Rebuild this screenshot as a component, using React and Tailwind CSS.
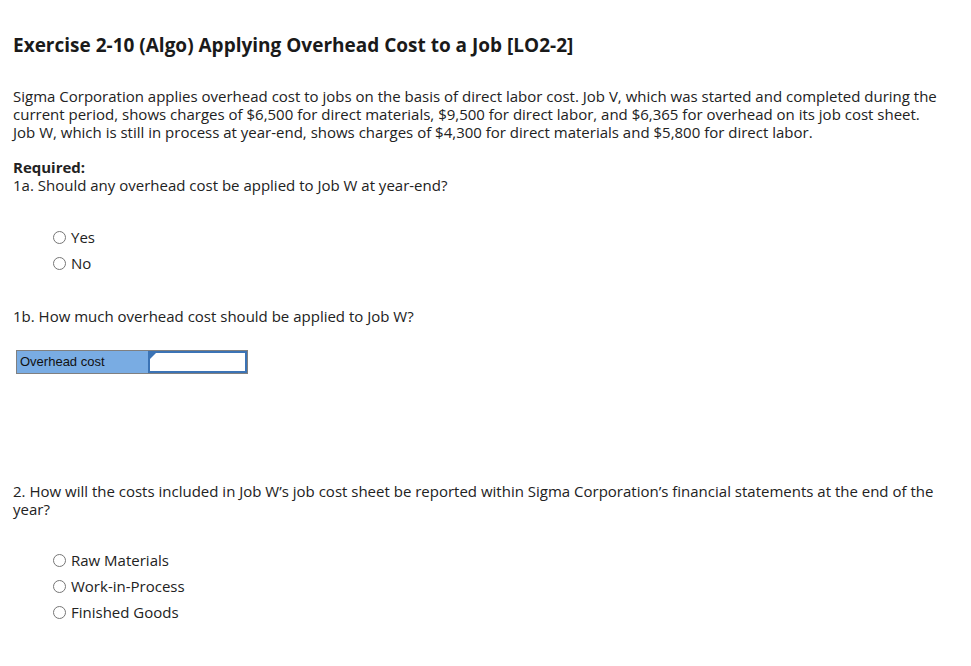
export default function App() {
  const font = { fontFamily: '"Open Sans", "Liberation Sans", sans-serif' };
  const Radio = ({ label }) => (
    <label className="flex items-center h-[26px] text-[15px] text-[#222]">
      <span className="w-[13px] h-[13px] rounded-full border border-[#767676] bg-white mr-[5px]" />
      {label}
    </label>
  );
  return (
    <div className="min-h-[666px] w-[971px] bg-white text-[#222] px-[13px]" style={font}>
      <h1 className="pt-[33px] text-[19px] font-bold leading-[24px] text-[#1a1a1a]">
        Exercise 2-10 (Algo) Applying Overhead Cost to a Job [LO2-2]
      </h1>
      <p className="mt-[30px] text-[15px] leading-[18px]">
        Sigma Corporation applies overhead cost to jobs on the basis of direct labor cost. Job V, which was started and completed during the
        <br />
        current period, shows charges of $6,500 for direct materials, $9,500 for direct labor, and $6,365 for overhead on its job cost sheet.
        <br />
        Job W, which is still in process at year-end, shows charges of $4,300 for direct materials and $5,800 for direct labor.
      </p>
      <div className="mt-[17px] text-[15px] leading-[18px]">
        <div className="font-bold">Required:</div>
        <div>1a. Should any overhead cost be applied to Job W at year-end?</div>
      </div>
      <div className="mt-[30px] pl-[40px]">
        <Radio label="Yes" />
        <Radio label="No" />
      </div>
      <p className="mt-[31px] text-[15px] leading-[18px]">1b. How much overhead cost should be applied to Job W?</p>
      <div className="mt-[25px] ml-[3px] flex w-[232px] h-[24px] border border-[#808080]">
        <div
          className="w-[131px] bg-[#79ace3] text-[13px] leading-[22px] pl-[3px] text-[#111]"
          style={{ fontFamily: '"Liberation Sans", Arial, sans-serif' }}
        >
          Overhead cost
        </div>
        <div className="relative flex-1 bg-white border-2 border-[#3b73b5]">
          <svg className="absolute left-0 top-0" width="6" height="6" viewBox="0 0 6 6">
            <path d="M0 0 L6 0 L0 6 Z" fill="#3b73b5" />
          </svg>
        </div>
      </div>
      <p className="mt-[108px] text-[15px] leading-[18px]">
        2. How will the costs included in Job W’s job cost sheet be reported within Sigma Corporation’s financial statements at the end of the
        <br />
        year?
      </p>
      <div className="mt-[29px] pl-[40px]">
        <Radio label="Raw Materials" />
        <Radio label="Work-in-Process" />
        <Radio label="Finished Goods" />
      </div>
    </div>
  );
}
